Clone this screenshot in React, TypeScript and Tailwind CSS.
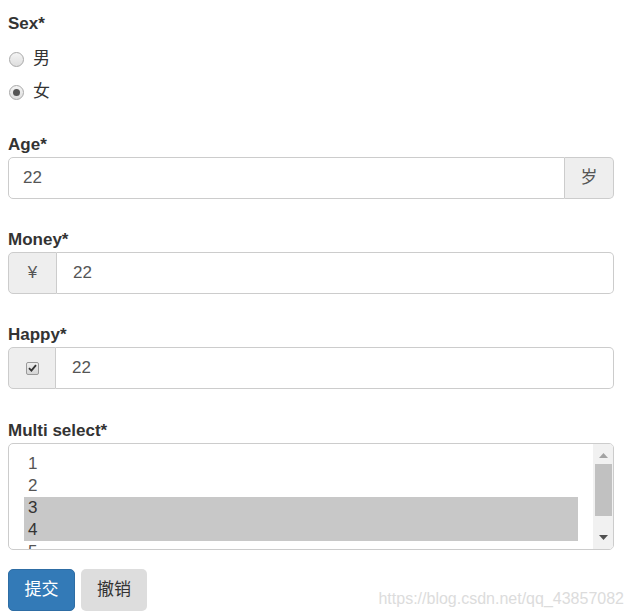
// Bootstrap-style form: radios, input groups, multi select, buttons
const FONT = "font-['Liberation_Sans','Noto_Sans_CJK_SC',sans-serif]";

function Label({ text, tall }: { text: string; tall?: boolean }) {
  return (
    <div className={`${tall ? "h-[26px] leading-[28px] mb-0" : "h-[24px] leading-[26px] mb-[1px]"} text-[17px] font-bold text-[#333]`}>
      {text}*
    </div>
  );
}

function Radio({ checked, label }: { checked?: boolean; label: string }) {
  return (
    <div className="flex items-center h-[22px] gap-[9px]">
      <span className="w-[15px] h-[15px] rounded-full border border-[#a9a9a9] bg-gradient-to-b from-[#f4f4f4] to-[#dedede] grid place-items-center">
        {checked && <span className="w-[7px] h-[7px] rounded-full bg-[#555]" />}
      </span>
      <span className="text-[17px] text-[#333]">{label}</span>
    </div>
  );
}

function Checkbox() {
  return (
    <span className="w-[13px] h-[13px] rounded-[2px] border border-[#999] bg-gradient-to-b from-[#eee] to-[#d5d5d5] grid place-items-center">
      <svg width="9" height="8" viewBox="0 0 9 8">
        <path d="M1 4.2 L3.4 6.6 L8 1.2" fill="none" stroke="#333" strokeWidth="1.8" />
      </svg>
    </span>
  );
}

const OPTIONS = ["1", "2", "3", "4", "5"];

export default function App() {
  return (
    <div className={`relative w-[634px] h-[615px] bg-white ${FONT} text-[#555]`}>
      <div className="pl-2 pt-[13px] w-[614px]">
        {/* Sex */}
        <div className="h-[22px] text-[17px] font-bold leading-[22px] text-[#333]">Sex*</div>
        <div className="mt-[13px] pl-[1px]">
          <Radio label="男" />
        </div>
        <div className="mt-[11px] pl-[1px]">
          <Radio label="女" checked />
        </div>

        {/* Age */}
        <div className="mt-[29px]">
          <Label text="Age" />
          <div className="flex h-[42px] text-[17px]">
            <div className="flex-1 flex items-center pl-[14px] border border-[#ccc] rounded-l-[5px]">22</div>
            <div className="w-[49px] grid place-items-center bg-[#eee] border border-l-0 border-[#ccc] rounded-r-[5px]">岁</div>
          </div>
        </div>

        {/* Money */}
        <div className="mt-[28px]">
          <Label text="Money" />
          <div className="flex h-[42px] text-[17px]">
            <div className="w-[49px] grid place-items-center bg-[#eee] border border-[#ccc] rounded-l-[5px]">¥</div>
            <div className="flex-1 flex items-center pl-[16px] border border-l-0 border-[#ccc] rounded-r-[5px]">22</div>
          </div>
        </div>

        {/* Happy */}
        <div className="mt-[28px]">
          <Label text="Happy" />
          <div className="flex h-[42px] text-[17px]">
            <div className="w-[48px] grid place-items-center bg-[#eee] border border-[#ccc] rounded-l-[5px]">
              <Checkbox />
            </div>
            <div className="flex-1 flex items-center pl-[16px] border border-l-0 border-[#ccc] rounded-r-[5px]">22</div>
          </div>
        </div>

        {/* Multi select */}
        <div className="mt-[28px]">
          <Label text="Multi select" tall />
          <div className="flex h-[107px] border border-[#ccc] rounded-[5px] overflow-hidden">
            <div className="flex-1 pt-[9px] pl-[15px] pr-[15px] overflow-hidden">
              {OPTIONS.map((o) => (
                <div
                  key={o}
                  className={`h-[22px] pl-[4px] text-[17px] leading-[22px] ${o === "3" || o === "4" ? "bg-[#c8c8c8] text-[#333]" : "text-[#555]"}`}
                >
                  {o}
                </div>
              ))}
            </div>
            <div className="w-[20px] bg-[#f1f1f1] flex flex-col items-center">
              <svg width="9" height="5" viewBox="0 0 9 5" className="mt-[9px]">
                <path d="M0 5 L4.5 0 L9 5 Z" fill="#a3a3a3" />
              </svg>
              <div className="mt-[6px] w-[17px] h-[52px] bg-[#c1c1c1]" />
              <div className="flex-1" />
              <svg width="9" height="5" viewBox="0 0 9 5" className="mb-[9px]">
                <path d="M0 0 L9 0 L4.5 5 Z" fill="#505050" />
              </svg>
            </div>
          </div>
        </div>

        {/* Buttons */}
        <div className="mt-[19px] flex gap-[6px]">
          <button className="w-[67px] h-[42px] rounded-[5px] bg-[#337ab7] border border-[#2e6da4] text-white text-[17px]">提交</button>
          <button className="w-[66px] h-[42px] rounded-[5px] bg-[#dddddd] text-[#333] text-[17px]">撤销</button>
        </div>
      </div>

      <div className="absolute right-[10px] top-[587px] text-[16px] text-[#dcdcdc]">https://blog.csdn.net/qq_43857082</div>
    </div>
  );
}
